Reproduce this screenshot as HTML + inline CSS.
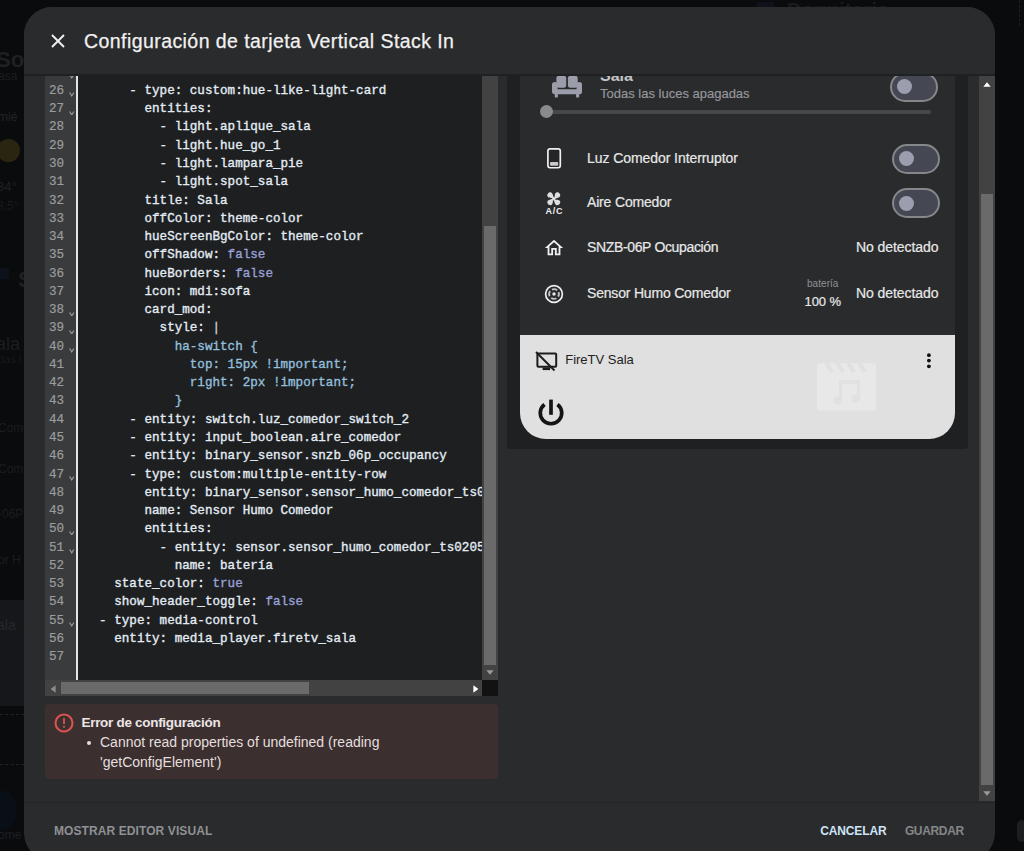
<!DOCTYPE html>
<html lang="es">
<head>
<meta charset="utf-8">
<title>Configuración de tarjeta Vertical Stack In</title>
<style>
*{box-sizing:border-box;margin:0;padding:0}
html,body{width:1024px;height:851px;overflow:hidden;background:#0a0b0d;font-family:"Liberation Sans",sans-serif;}
.abs{position:absolute}
#bg{position:absolute;left:0;top:0;width:1024px;height:851px;overflow:hidden}
#dialog{position:absolute;left:24px;top:7px;width:971px;height:853.5px;border-radius:28px;background:#2a2b2d;overflow:hidden}
/* everything inside dialog positioned in page coords via wrapper offset */
#in{position:absolute;left:-24px;top:-7px;width:1024px;height:851px}
#hdr{left:24px;top:7px;width:971px;height:67.2px;background:#2a2b2d;z-index:5}
#hdrline{left:24px;top:74.2px;width:971px;height:1.5px;background:#202123;z-index:5}
#title{z-index:6;left:84px;top:28.6px;-webkit-text-stroke:.25px;font-size:19.5px;line-height:24px;letter-spacing:.43px;color:#f1f1f1;white-space:nowrap}
/* code editor */
#code{left:45px;top:75.7px;width:437px;height:604.3px;background:#1e1f21;overflow:hidden}
#gutter{left:0;top:0;width:31px;height:605px;background:#3a3b3d}
#gline{left:31px;top:0;width:2.2px;height:605px;background:#dfe6ec}
.ln{position:absolute;left:0;width:19px;text-align:right;font-family:"Liberation Mono",monospace;font-size:12.6px;line-height:18.27px;height:18.27px;color:#9b9c9e;white-space:pre;-webkit-text-stroke:.2px}
.fold{position:absolute;left:24px;width:5.5px;height:4.5px}
.cl{position:absolute;left:39px;-webkit-text-stroke:.35px;font-family:"Liberation Mono",monospace;font-size:12.6px;line-height:18.27px;height:18.27px;color:#e3ecf4;white-space:pre}
.v{color:#9aa0d8}
.c{color:#93bfdc}
.p{color:#c8d0d8}
/* scrollbars */
#vsb{left:482px;top:75.7px;width:16px;height:604.3px;background:#424242}
#vth{left:484px;top:226px;width:12px;height:439px;background:#6a6a6a}
#hsb{left:45px;top:680px;width:437px;height:16px;background:#424242}
#hth{left:61px;top:682px;width:248px;height:12px;background:#6a6a6a}
#corner{left:482px;top:680px;width:16px;height:16px;background:#121212}
/* error */
#err{left:45px;top:704px;width:453px;height:74.5px;background:#3c2f2f;border-radius:4px}
#errt{left:81.5px;top:713.8px;font-size:13.5px;letter-spacing:-.3px;font-weight:bold;line-height:18px;color:#ebe6e6;white-space:nowrap}
.errl{font-size:14px;line-height:19.5px;color:#e4dfdf;white-space:nowrap}
/* footer */
#ftline{left:24px;top:801.6px;width:971px;height:1px;background:#232426}
.btn{font-size:12px;font-weight:bold;line-height:14px;white-space:nowrap}
/* preview */
#wrap{left:507px;top:75.7px;width:461px;height:373.3px;background:#1f2022;border-radius:0 0 4px 4px}
#card{left:520px;top:75.7px;width:435px;height:259.3px;background:#2a2b2d}
#media{left:520px;top:334.5px;width:435px;height:104px;background:#e0e0e0;border-radius:0 0 26px 26px}
.row{font-size:14px;line-height:18px;color:#e8e8e8;white-space:nowrap;letter-spacing:-.07px;-webkit-text-stroke:.2px}
.sw{position:absolute;width:48px;height:30px;border-radius:15px;border:2px solid #86878b;background:#454853}
.sw i{position:absolute;left:4.9px;top:5.3px;width:15px;height:15px;border-radius:50%;background:#9c9eb0}
#psb{left:979.3px;top:75.7px;width:15.5px;height:725.3px;background:#424242}
#pth{left:981.3px;top:193.8px;width:11.6px;height:591.2px;background:#6a6a6a}
</style>
</head>
<body>
<div id="bg">
  <div class="abs" style="left:0;top:600px;width:30px;height:106px;background:#16171a"></div>
  <div class="abs" style="left:0;top:714px;width:30px;height:0;border-top:1px dashed #232428"></div>
  <div class="abs" style="left:0;top:764px;width:30px;height:0;border-top:1px dashed #232428"></div>
  <div class="abs" style="left:-3.5px;top:138.5px;width:23px;height:23px;border-radius:50%;background:#2a2510"></div>
  <div class="abs" style="left:-4px;top:47px;font-size:22px;font-weight:bold;line-height:26px;color:#1f2024;white-space:nowrap">Sol</div>
  <div class="abs" style="left:-2px;top:69px;font-size:12px;line-height:14px;color:#1c1d20;white-space:nowrap">asa</div>
  <div class="abs" style="left:-2px;top:110px;font-size:12px;line-height:14px;color:#242529;white-space:nowrap">mié</div>
  <div class="abs" style="left:-3px;top:179px;font-size:13px;line-height:15px;color:#202125;white-space:nowrap">34°</div>
  <div class="abs" style="left:-3px;top:199px;font-size:12px;line-height:14px;color:#191a1d;white-space:nowrap">8,5°</div>
  <div class="abs" style="left:0;top:268px;width:9px;height:11px;background:#0c111b"></div>
  <div class="abs" style="left:18px;top:267px;font-size:22px;font-weight:bold;line-height:26px;color:#1f2024;white-space:nowrap">S</div>
  <div class="abs" style="left:-4px;top:333px;font-size:18px;line-height:22px;color:#1c1d21;white-space:nowrap">ala</div>
  <div class="abs" style="left:-2px;top:353px;font-size:11px;line-height:13px;color:#17181b;white-space:nowrap">das l</div>
  <div class="abs" style="left:-2px;top:421px;font-size:12px;line-height:14px;color:#1b1c20;white-space:nowrap">Come</div>
  <div class="abs" style="left:-2px;top:462px;font-size:12px;line-height:14px;color:#1b1c20;white-space:nowrap">Com</div>
  <div class="abs" style="left:-2px;top:507px;font-size:12px;line-height:14px;color:#1b1c20;white-space:nowrap">-06P</div>
  <div class="abs" style="left:-2px;top:553px;font-size:12px;line-height:14px;color:#1b1c20;white-space:nowrap">or H</div>
  <div class="abs" style="left:-3px;top:617px;font-size:14px;line-height:16px;color:#27282c;white-space:nowrap">ala</div>
  <div class="abs" style="left:-2px;top:828px;font-size:12px;line-height:14px;color:#1e1f23;white-space:nowrap">ome</div>
  <div class="abs" style="left:0;top:790px;width:16px;height:40px;border-radius:0 16px 16px 0;background:#0a0f17"></div>
  <div class="abs" style="left:787px;top:-1px;font-size:20px;font-weight:bold;line-height:22px;color:#1a1b1e;white-space:nowrap">Dormitorio</div>
  <div class="abs" style="left:757px;top:2px;width:17px;height:6px;background:#0f121b"></div>
  <div class="abs" style="left:1019px;top:0;width:0;height:26px;border-left:1px dashed #1e1f23"></div>
  <div class="abs" style="left:1017px;top:820px;width:10px;height:22px;border-radius:6px;background:#1d1e22"></div>
</div>
<div id="dialog"><div id="in">
  <!-- header -->
  <div id="hdr" class="abs"></div>
  <svg class="abs" style="z-index:6;left:50.5px;top:34px" width="14" height="14" viewBox="0 0 14 14"><path d="M1 1L13 13M13 1L1 13" stroke="#f1f1f1" stroke-width="1.9" fill="none"/></svg>
  <div id="title" class="abs">Configuración de tarjeta Vertical Stack In</div>
  <div id="hdrline" class="abs"></div>

  <!-- code editor -->
  <div id="code" class="abs">
    <div id="gutter" class="abs"></div>
    <div id="gline" class="abs"></div>
    <div id="lines">
<svg class="fold" style="top:-1.47px" viewBox="0 0 5.5 4.5"><path d="M0.6 0.5L2.75 3.9L4.9 0.5" fill="none" stroke="#98999b" stroke-width="1.15"/></svg>
<div class="ln" style="top:6.20px">26</div>
<svg class="fold" style="top:16.80px" viewBox="0 0 5.5 4.5"><path d="M0.6 0.5L2.75 3.9L4.9 0.5" fill="none" stroke="#98999b" stroke-width="1.15"/></svg>
<div class="cl" style="top:6.20px">      - type: custom:hue-like-light-card</div>
<div class="ln" style="top:24.47px">27</div>
<svg class="fold" style="top:35.07px" viewBox="0 0 5.5 4.5"><path d="M0.6 0.5L2.75 3.9L4.9 0.5" fill="none" stroke="#98999b" stroke-width="1.15"/></svg>
<div class="cl" style="top:24.47px">        entities:</div>
<div class="ln" style="top:42.74px">28</div>
<div class="cl" style="top:42.74px">          - light.aplique_sala</div>
<div class="ln" style="top:61.01px">29</div>
<div class="cl" style="top:61.01px">          - light.hue_go_1</div>
<div class="ln" style="top:79.28px">30</div>
<div class="cl" style="top:79.28px">          - light.lampara_pie</div>
<div class="ln" style="top:97.55px">31</div>
<div class="cl" style="top:97.55px">          - light.spot_sala</div>
<div class="ln" style="top:115.82px">32</div>
<div class="cl" style="top:115.82px">        title: Sala</div>
<div class="ln" style="top:134.09px">33</div>
<div class="cl" style="top:134.09px">        offColor: theme-color</div>
<div class="ln" style="top:152.36px">34</div>
<div class="cl" style="top:152.36px">        hueScreenBgColor: theme-color</div>
<div class="ln" style="top:170.63px">35</div>
<div class="cl" style="top:170.63px">        offShadow: <span class="v">false</span></div>
<div class="ln" style="top:188.90px">36</div>
<div class="cl" style="top:188.90px">        hueBorders: <span class="v">false</span></div>
<div class="ln" style="top:207.17px">37</div>
<div class="cl" style="top:207.17px">        icon: mdi:sofa</div>
<div class="ln" style="top:225.44px">38</div>
<svg class="fold" style="top:236.04px" viewBox="0 0 5.5 4.5"><path d="M0.6 0.5L2.75 3.9L4.9 0.5" fill="none" stroke="#98999b" stroke-width="1.15"/></svg>
<div class="cl" style="top:225.44px">        card_mod:</div>
<div class="ln" style="top:243.71px">39</div>
<svg class="fold" style="top:254.31px" viewBox="0 0 5.5 4.5"><path d="M0.6 0.5L2.75 3.9L4.9 0.5" fill="none" stroke="#98999b" stroke-width="1.15"/></svg>
<div class="cl" style="top:243.71px">          style: <span class="p">|</span></div>
<div class="ln" style="top:261.98px">40</div>
<svg class="fold" style="top:272.58px" viewBox="0 0 5.5 4.5"><path d="M0.6 0.5L2.75 3.9L4.9 0.5" fill="none" stroke="#98999b" stroke-width="1.15"/></svg>
<div class="cl c" style="top:261.98px">            ha-switch {</div>
<div class="ln" style="top:280.25px">41</div>
<div class="cl c" style="top:280.25px">              top: 15px !important;</div>
<div class="ln" style="top:298.52px">42</div>
<div class="cl c" style="top:298.52px">              right: 2px !important;</div>
<div class="ln" style="top:316.79px">43</div>
<div class="cl c" style="top:316.79px">            }</div>
<div class="ln" style="top:335.06px">44</div>
<div class="cl" style="top:335.06px">      - entity: switch.luz_comedor_switch_2</div>
<div class="ln" style="top:353.33px">45</div>
<div class="cl" style="top:353.33px">      - entity: input_boolean.aire_comedor</div>
<div class="ln" style="top:371.60px">46</div>
<div class="cl" style="top:371.60px">      - entity: binary_sensor.snzb_06p_occupancy</div>
<div class="ln" style="top:389.87px">47</div>
<svg class="fold" style="top:400.47px" viewBox="0 0 5.5 4.5"><path d="M0.6 0.5L2.75 3.9L4.9 0.5" fill="none" stroke="#98999b" stroke-width="1.15"/></svg>
<div class="cl" style="top:389.87px">      - type: custom:multiple-entity-row</div>
<div class="ln" style="top:408.14px">48</div>
<div class="cl" style="top:408.14px">        entity: binary_sensor.sensor_humo_comedor_ts0205_smoke</div>
<div class="ln" style="top:426.41px">49</div>
<div class="cl" style="top:426.41px">        name: Sensor Humo Comedor</div>
<div class="ln" style="top:444.68px">50</div>
<svg class="fold" style="top:455.28px" viewBox="0 0 5.5 4.5"><path d="M0.6 0.5L2.75 3.9L4.9 0.5" fill="none" stroke="#98999b" stroke-width="1.15"/></svg>
<div class="cl" style="top:444.68px">        entities:</div>
<div class="ln" style="top:462.95px">51</div>
<svg class="fold" style="top:473.55px" viewBox="0 0 5.5 4.5"><path d="M0.6 0.5L2.75 3.9L4.9 0.5" fill="none" stroke="#98999b" stroke-width="1.15"/></svg>
<div class="cl" style="top:462.95px">          - entity: sensor.sensor_humo_comedor_ts0205_battery</div>
<div class="ln" style="top:481.22px">52</div>
<div class="cl" style="top:481.22px">            name: batería</div>
<div class="ln" style="top:499.49px">53</div>
<div class="cl" style="top:499.49px">    state_color: <span class="v">true</span></div>
<div class="ln" style="top:517.76px">54</div>
<div class="cl" style="top:517.76px">    show_header_toggle: <span class="v">false</span></div>
<div class="ln" style="top:536.03px">55</div>
<svg class="fold" style="top:546.63px" viewBox="0 0 5.5 4.5"><path d="M0.6 0.5L2.75 3.9L4.9 0.5" fill="none" stroke="#98999b" stroke-width="1.15"/></svg>
<div class="cl" style="top:536.03px">  - type: media-control</div>
<div class="ln" style="top:554.30px">56</div>
<div class="cl" style="top:554.30px">    entity: media_player.firetv_sala</div>
<div class="ln" style="top:572.57px">57</div>
</div>
  </div>
  <div id="vsb" class="abs"></div><div id="vth" class="abs"></div>
  <div id="hsb" class="abs"></div><div id="hth" class="abs"></div>
  <div id="corner" class="abs"></div>
  <svg class="abs" style="left:486px;top:669.5px" width="8" height="5" viewBox="0 0 8 5"><path d="M0.3 0.3H7.7L4 4.7Z" fill="#9a9a9a"/></svg>
  <svg class="abs" style="left:472.5px;top:684.5px" width="6" height="8" viewBox="0 0 6 8"><path d="M0.4 0.2V7.8L5.4 4Z" fill="#ffffff"/></svg>
  <svg class="abs" style="left:49.5px;top:684.5px" width="6" height="8" viewBox="0 0 6 8"><path d="M5.6 0.2V7.8L0.6 4Z" fill="#8c8c8c"/></svg>

  <!-- error -->
  <div id="err" class="abs"></div>
  <div id="errt" class="abs">Error de configuración</div>
  <svg class="abs" style="left:53.8px;top:712.9px" width="20" height="20" viewBox="0 0 20 20"><circle cx="10" cy="10" r="8.5" fill="none" stroke="#d9534f" stroke-width="2.1"/><rect x="9.1" y="5.2" width="1.8" height="6" fill="#d9534f"/><rect x="9.1" y="12.8" width="1.8" height="1.9" fill="#d9534f"/></svg>
  <div class="abs" style="left:86.7px;top:741.4px;width:4px;height:4px;border-radius:50%;background:#e4dfdf"></div>
  <div class="abs errl" style="left:100px;top:733px">Cannot read properties of undefined (reading</div>
  <div class="abs errl" style="left:100px;top:752.8px">'getConfigElement')</div>

  <!-- footer -->
  <div id="ftline" class="abs"></div>
  <div class="abs btn" style="left:54px;top:823.8px;color:#8f9194;letter-spacing:.09px">MOSTRAR EDITOR VISUAL</div>
  <div class="abs btn" style="left:820.3px;top:823.8px;color:#cfe3f7;letter-spacing:-.15px">CANCELAR</div>
  <div class="abs btn" style="left:904.9px;top:823.8px;color:#858688;letter-spacing:-.35px">GUARDAR</div>

  <!-- preview -->
  <div id="wrap" class="abs"></div>
  <div id="card" class="abs"></div>
  <div id="media" class="abs"></div>
  <!-- Sala header (clipped by dialog header) -->
  <div class="abs" style="left:520px;top:66px;width:435px;height:70px;overflow:hidden">
    <svg class="abs" style="left:32px;top:4.8px" width="30.1" height="30.1" viewBox="0 0 24 24" fill="#9b9daa">
      <rect x="3.5" y="3.7" width="7.8" height="9.6" rx="2"/><rect x="12.7" y="3.7" width="7.8" height="9.6" rx="2"/>
      <path d="M2.2 8.7A2.2 2.2 0 0 1 4.4 10.9V14.5H19.6V10.9A2.2 2.2 0 0 1 24 10.9V16.4A2.2 2.2 0 0 1 21.8 18.6H2.2A2.2 2.2 0 0 1 0 16.4V10.9A2.2 2.2 0 0 1 2.2 8.7Z"/>
      <rect x="2.2" y="18" width="2.5" height="3.1"/><rect x="19.2" y="18" width="2.5" height="3.1"/>
    </svg>
    <div class="abs" style="left:80px;top:1.1px;font-size:16px;font-weight:bold;line-height:18px;color:#c4c4c6">Sala</div>
    <div class="abs" style="left:80px;top:20.2px;font-size:13px;line-height:15px;color:#96989c;-webkit-text-stroke:.15px;white-space:nowrap">Todas las luces apagadas</div>
  </div>
  <div class="sw" style="left:890px;top:71.5px"><i></i></div>
  <div class="abs" style="left:546px;top:110px;width:384.5px;height:3.7px;border-radius:2px;background:#47484b"></div>
  <div class="abs" style="left:539.8px;top:105.1px;width:13.2px;height:13.2px;border-radius:50%;background:#8a8a8a"></div>
  <!-- row 1 -->
  <svg class="abs" style="left:546px;top:147px" width="16" height="23" viewBox="0 0 16 23"><rect x="1.9" y="1.85" width="12.4" height="18.9" rx="2.2" fill="#242527" stroke="#f0f0f0" stroke-width="1.7"/><rect x="4" y="15" width="8.2" height="3.8" rx="1" fill="#c9c9c9"/></svg>
  <div class="abs row" style="left:587px;top:148.7px">Luz Comedor Interruptor</div>
  <div class="sw" style="left:892px;top:143.8px"><i></i></div>
  <!-- row 2 -->
  <svg class="abs" style="left:545px;top:189.6px" width="17.6" height="17.6" viewBox="-7.6 -7.6 15.2 15.2" fill="#dedede"><path d="M0.2 -0.9C-1 -2.2 -3 -3.6 -2.3 -5.4C-1.6 -7.2 1.6 -7.2 2.3 -5.4C2.9 -3.8 1.2 -2.4 0.9 -0.9Z" transform="rotate(45)"/><path d="M0.2 -0.9C-1 -2.2 -3 -3.6 -2.3 -5.4C-1.6 -7.2 1.6 -7.2 2.3 -5.4C2.9 -3.8 1.2 -2.4 0.9 -0.9Z" transform="rotate(135)"/><path d="M0.2 -0.9C-1 -2.2 -3 -3.6 -2.3 -5.4C-1.6 -7.2 1.6 -7.2 2.3 -5.4C2.9 -3.8 1.2 -2.4 0.9 -0.9Z" transform="rotate(225)"/><path d="M0.2 -0.9C-1 -2.2 -3 -3.6 -2.3 -5.4C-1.6 -7.2 1.6 -7.2 2.3 -5.4C2.9 -3.8 1.2 -2.4 0.9 -0.9Z" transform="rotate(315)"/><circle r="1.5"/></svg>
  <div class="abs" style="left:545.4px;top:205.8px;font-size:9px;font-weight:bold;line-height:10px;letter-spacing:.75px;color:#f0f0f0">A/C</div>
  <div class="abs row" style="left:587px;top:193px;letter-spacing:-.17px">Aire Comedor</div>
  <div class="sw" style="left:892px;top:188.3px"><i></i></div>
  <!-- row 3 -->
  <svg class="abs" style="left:543.1px;top:236.6px" width="22" height="22" viewBox="0 0 24 24"><path fill="#f0f0f0" d="M12 5.69L17 10.19V18H15V12H9V18H7V10.19L12 5.69M12 3L2 12H5V20H11V14H13V20H19V12H22L12 3Z"/></svg>
  <div class="abs row" style="left:587px;top:238.3px;letter-spacing:-.35px">SNZB-06P Ocupación</div>
  <div class="abs row" style="left:856px;top:238.3px">No detectado</div>
  <!-- row 4 -->
  <svg class="abs" style="left:543.9px;top:283.8px" width="20" height="20" viewBox="-10 -10 20 20" fill="none"><circle r="8.4" stroke="#f0f0f0" stroke-width="1.7"/><circle r="4.9" stroke="#c4c4c4" stroke-width="1.9" stroke-dasharray="5.5 2.2" stroke-dashoffset="2.75"/><circle r="1.7" fill="#e6e6e6"/></svg>
  <div class="abs row" style="left:587px;top:284px;letter-spacing:-.19px">Sensor Humo Comedor</div>
  <div class="abs" style="left:807px;top:277.3px;font-size:10px;line-height:13px;color:#8f9296;white-space:nowrap;letter-spacing:.05px">batería</div>
  <div class="abs row" style="left:804.6px;top:293px;font-size:13px;letter-spacing:-.1px">100 %</div>
  <div class="abs row" style="left:856px;top:284px">No detectado</div>
  <!-- media -->
  <svg class="abs" style="left:535px;top:350.5px" width="23" height="21" viewBox="0 0 23 21" fill="none" stroke="#1c1c1c"><rect x="2.4" y="2.6" width="18.8" height="13.2" rx="1" stroke-width="2"/><path d="M7.6 17.8H15.2" stroke-width="2.6"/><path d="M1 1L19.5 19.5" stroke-width="2"/></svg>
  <div class="abs" style="left:565.2px;top:352.1px;font-size:13px;line-height:16px;color:#212121;white-space:nowrap">FireTV Sala</div>
  <svg class="abs" style="left:535.55px;top:397.7px" width="30" height="30" viewBox="0 0 30 30" fill="none" stroke="#141414" stroke-width="3.7"><path d="M21.47 6.41A10.75 10.75 0 1 1 8.53 6.41"/><path d="M15 1.6V16.8"/></svg>
  <svg class="abs" style="left:926px;top:352px" width="6" height="17" viewBox="0 0 6 17" fill="#111"><circle cx="2.9" cy="3.2" r="1.9"/><circle cx="2.9" cy="8.6" r="1.9"/><circle cx="2.9" cy="14.3" r="1.9"/></svg>
  <svg class="abs" style="left:816.9px;top:361px" width="59" height="50" viewBox="0 0 59 50"><path fill="#e8e8e8" d="M3 2.2H56A3 3 0 0 1 59 5.2V46.5A3 3 0 0 1 56 49.5H3A3 3 0 0 1 0 46.5V5.2A3 3 0 0 1 3 2.2Z"/><path d="M9 2L15 11M20 2L26 11M31 2L37 11M42 2L48 11" stroke="#e0e0e0" stroke-width="4" fill="none"/><path fill="#e1e1e1" d="M22 19H43V37.5A4.3 4.3 0 1 1 40 33.4V23H25V39.5A4.3 4.3 0 1 1 22 35.4Z"/></svg>
  <div id="psb" class="abs"></div><div id="pth" class="abs"></div>
  <svg class="abs" style="left:983.2px;top:81.5px" width="8" height="5" viewBox="0 0 8 5"><path d="M0.3 4.7H7.7L4 0.3Z" fill="#ffffff"/></svg>
  <svg class="abs" style="left:983.2px;top:790.5px" width="8" height="5" viewBox="0 0 8 5"><path d="M0.3 0.3H7.7L4 4.7Z" fill="#9a9a9a"/></svg>
</div></div>
</body>
</html>
